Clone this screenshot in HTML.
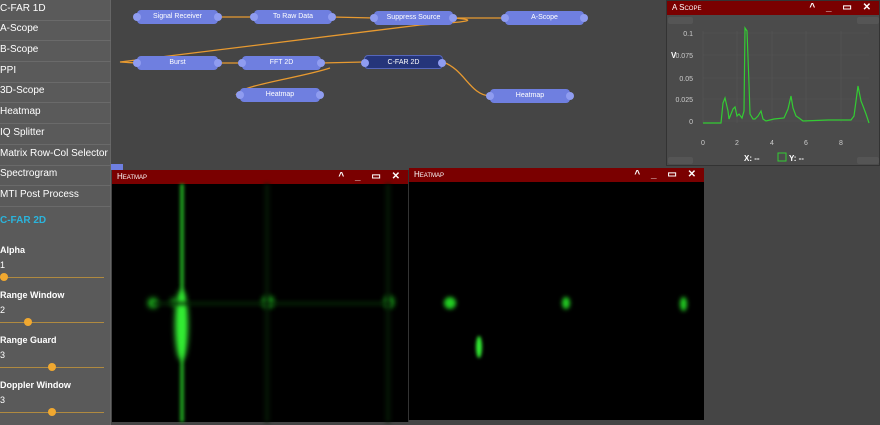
<!DOCTYPE html>
<html><head><meta charset="utf-8"><style>
*{margin:0;padding:0;box-sizing:border-box}
body{width:880px;height:425px;overflow:hidden;background:#454545;font-family:"Liberation Sans",sans-serif;position:relative}
.side{position:absolute;left:0;top:0;width:111px;height:425px;background:#5a5a5a;border-right:1px solid #666}
.item{position:absolute;left:0;width:111px;height:21px;border-bottom:1px solid #6a6a6a;color:#fff;font-size:10px;line-height:17px;padding-left:0}
.lab{position:absolute;left:0;color:#fff;font-size:9px;font-weight:bold}
.val{position:absolute;left:0;color:#fff;font-size:9px}
.sl{position:absolute;left:0;width:104px;height:1px;background:#b08a40}
.knob{position:absolute;width:8px;height:8px;border-radius:50%;background:#f0a830;top:-4px}
.node{position:absolute;height:14px;border-radius:4px;background:#6f7fe0;color:#fff;font-size:7px;text-align:center;line-height:14px}
.node:before,.node:after{content:"";position:absolute;top:3px;width:8px;height:8px;border-radius:50%;background:#8f9cf0}
.node:before{left:-4px}.node:after{right:-4px}
.win{position:absolute;background:#000}
.tb{position:absolute;left:0;right:0;top:0;height:14px;background:#7a0000;color:#fff;font-size:8px;font-variant:small-caps;padding-left:5px;line-height:14px}
.ic{position:absolute;right:4px;top:0;font-size:10px;font-weight:bold;letter-spacing:4px}
.g{position:absolute;border-radius:50%;background:#2c2;filter:blur(3px)}
</style></head><body>
<div class="side">
<div class="item" style="top:0">C-FAR 1D</div>
<div class="item" style="top:20px">A-Scope</div>
<div class="item" style="top:41px">B-Scope</div>
<div class="item" style="top:62px">PPI</div>
<div class="item" style="top:82px">3D-Scope</div>
<div class="item" style="top:103px">Heatmap</div>
<div class="item" style="top:124px">IQ Splitter</div>
<div class="item" style="top:145px">Matrix Row-Col Selector</div>
<div class="item" style="top:165px">Spectrogram</div>
<div class="item" style="top:186px">MTI Post Process</div>
<div class="lab" style="top:215px;color:#2bb4dc;font-size:10px">C-FAR 2D</div>
<div class="lab" style="top:245px">Alpha</div><div class="val" style="top:260px">1</div>
<div class="sl" style="top:277px"><div class="knob" style="left:0"></div></div>
<div class="lab" style="top:290px">Range Window</div><div class="val" style="top:305px">2</div>
<div class="sl" style="top:322px"><div class="knob" style="left:24px"></div></div>
<div class="lab" style="top:335px">Range Guard</div><div class="val" style="top:350px">3</div>
<div class="sl" style="top:367px"><div class="knob" style="left:48px"></div></div>
<div class="lab" style="top:380px">Doppler Window</div><div class="val" style="top:395px">3</div>
<div class="sl" style="top:412px"><div class="knob" style="left:48px"></div></div>
</div>
<div style="position:absolute;left:111px;top:164px;width:12px;height:6px;background:#6f7fe0"></div>
<svg style="position:absolute;left:0;top:0" width="880" height="425" fill="none" stroke="#e89a30" stroke-width="1.3">
<path d="M218 17 L254 17"/><path d="M332 17 L374 18"/><path d="M453 18 L505 18"/>
<path d="M453 18 C480 20 470 22 420 25 L120 62 L137 63"/>
<path d="M218 63 L242 63"/><path d="M321 63 L364 62"/>
<path d="M330 68 C300 78 240 85 236 95"/>
<path d="M443 62 C465 70 470 95 490 96"/>
</svg>
<div class="node" style="left:137px;top:10px;width:81px">Signal Receiver</div>
<div class="node" style="left:254px;top:10px;width:78px">To Raw Data</div>
<div class="node" style="left:374px;top:11px;width:79px">Suppress Source</div>
<div class="node" style="left:505px;top:11px;width:79px">A-Scope</div>
<div class="node" style="left:137px;top:56px;width:81px">Burst</div>
<div class="node" style="left:242px;top:56px;width:79px">FFT 2D</div>
<div class="node" style="left:364px;top:55px;width:79px;background:#25357a;border:1px solid #5566bb">C-FAR 2D</div>
<div class="node" style="left:240px;top:88px;width:80px">Heatmap</div>
<div class="node" style="left:490px;top:89px;width:80px">Heatmap</div>

<div class="win" style="left:666px;top:0;width:214px;height:166px;background:#4b4b4b;border:1px solid #333">
<div class="tb" style="height:14px">A Scope<span class="ic">^ _ ▭ ✕</span></div>
<svg style="position:absolute;left:-666px;top:0" width="880" height="166">
<g stroke="#555" stroke-width="0.6"><path d="M702 32H868M702 54H868M702 77H868M702 98H868M702 120H868M702 30V122M736 30V122M771 30V122M805 30V122M840 30V122"/></g>
<g fill="#ccc" font-size="7" font-family="Liberation Sans" text-anchor="end"><text x="692" y="35">0.1</text><text x="692" y="57">0.075</text><text x="692" y="80">0.05</text><text x="692" y="101">0.025</text><text x="692" y="123">0</text></g>
<g fill="#ccc" font-size="7" font-family="Liberation Sans" text-anchor="middle"><text x="702" y="144">0</text><text x="736" y="144">2</text><text x="771" y="144">4</text><text x="805" y="144">6</text><text x="840" y="144">8</text></g>
<text x="670" y="57" fill="#fff" font-size="8" font-weight="bold" font-family="Liberation Sans">V</text>
<polyline fill="none" stroke="#3c3" stroke-width="1.2" points="702,122 720,122 722,102 724,97 727,110 728,118 732,108 734,106 736,115 738,113 741,117 743,110 744,27 746,30 748,83 749,113 752,118 754,118 757,115 760,110 762,118 765,120 773,118 783,117 787,108 790,95 792,107 795,115 798,117 802,120 827,119 850,119 853,115 857,85 860,100 862,105 865,113 868,122"/>
<text x="743" y="160" fill="#fff" font-size="8" font-weight="bold" font-family="Liberation Sans">X:  --</text>
<rect x="777" y="152" width="8" height="8" stroke="#3c3" fill="none"/>
<text x="788" y="160" fill="#fff" font-size="8" font-weight="bold" font-family="Liberation Sans">Y:  --</text>
<rect x="667" y="156" width="25" height="7" rx="2" fill="#555"/><rect x="856" y="156" width="22" height="7" rx="2" fill="#555"/>
<rect x="667" y="16" width="25" height="7" rx="2" fill="#555"/><rect x="856" y="16" width="22" height="7" rx="2" fill="#555"/>
</svg>
</div>

<div class="win" style="left:112px;top:170px;width:297px;height:252px;border-right:1px solid #333">
<div class="tb">Heatmap<span class="ic">^ _ ▭ ✕</span></div>
<div style="position:absolute;left:68px;top:14px;width:4px;height:238px;background:#20a020;filter:blur(1.5px)"></div>
<div class="g" style="left:63px;top:120px;width:13px;height:70px;background:#3e3"></div>
<div class="g" style="left:36px;top:128px;width:10px;height:10px"></div>
<div class="g" style="left:58px;top:128px;width:8px;height:8px;opacity:.7"></div>
<div class="g" style="left:150px;top:126px;width:12px;height:12px;opacity:.9"></div>
<div class="g" style="left:272px;top:126px;width:10px;height:12px;opacity:.9"></div>
<div style="position:absolute;left:40px;top:132px;width:240px;height:3px;background:#062806;filter:blur(2px)"></div>
<div style="position:absolute;left:153px;top:14px;width:4px;height:238px;background:#061a06;filter:blur(2px)"></div>
<div style="position:absolute;left:274px;top:14px;width:4px;height:238px;background:#061a06;filter:blur(2px)"></div>
</div>

<div class="win" style="left:409px;top:168px;width:295px;height:252px">
<div class="tb">Heatmap<span class="ic">^ _ ▭ ✕</span></div>
<div class="g" style="left:35px;top:129px;width:12px;height:12px;filter:blur(2px)"></div>
<div class="g" style="left:153px;top:129px;width:8px;height:12px;filter:blur(2px)"></div>
<div class="g" style="left:271px;top:129px;width:7px;height:14px;filter:blur(2px)"></div>
<div class="g" style="left:67px;top:168px;width:6px;height:22px;background:#3e3;filter:blur(1.5px)"></div>
</div>
</body></html>
